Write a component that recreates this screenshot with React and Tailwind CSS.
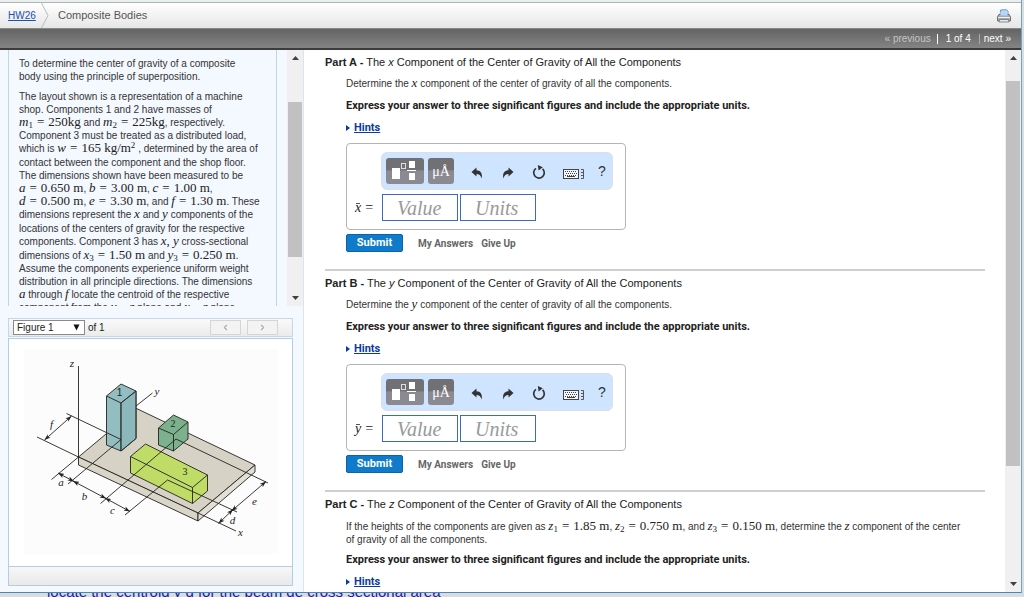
import { ChevronLeft, ChevronRight } from "lucide-react";

const serif = "font-['Liberation_Serif',serif]";

function M({ children }) {
  return <span className="font-['Liberation_Serif',serif] text-[13px] leading-[0] text-[#222]">{children}</span>;
}

function V({ children, sub }) {
  return (
    <>
      <i>{children}</i>
      {sub && <sub className="text-[9px] leading-[0]">{sub}</sub>}
    </>
  );
}

function Eq() {
  return <span className="px-1">=</span>;
}

function Triangle({ up }) {
  return (
    <svg className="h-1 w-[7px]" viewBox="0 0 7 4" aria-hidden="true">
      <path d={up ? "M0 4 L3.5 0 L7 4 Z" : "M0 0 L3.5 4 L7 0 Z"} fill="#404040" />
    </svg>
  );
}

function Scrollbar({ before, thumb, after, label }) {
  return (
    <div aria-label={label} className="flex w-4 shrink-0 flex-col items-center bg-[#f0f0f0] px-px">
      <div className="flex h-4 shrink-0 items-center">
        <Triangle up />
      </div>
      <div style={{ flexGrow: before }} />
      <div className="w-full bg-[#c1c1c1]" style={{ flexGrow: thumb }} />
      <div style={{ flexGrow: after }} />
      <div className="flex h-4 shrink-0 items-center">
        <Triangle />
      </div>
    </div>
  );
}

function Printer() {
  return (
    <svg className="h-[14px] w-[14px]" viewBox="0 0 14 14" aria-hidden="true">
      <path d="M3 7 L3.6 1 L9.5 0.7 L11 2.2 L11 7 Z" fill="#b9dcfa" stroke="#5f8fc4" strokeWidth="0.9" />
      <path d="M1.8 5.5 L12.2 5.5 L13.5 8 L13.5 12 L0.5 12 L0.5 8 Z" fill="#a9a9ae" stroke="#5b5b60" strokeWidth="0.8" />
      <path d="M3.4 3 H10.6 V6.5 H3.4 Z" fill="#b5d6f8" />
      <path d="M1 8.5 H13" stroke="#f2f2f2" strokeWidth="1" />
      <path d="M2.5 10.5 H11.5 L12 13 H2 Z" fill="#dfeaf6" stroke="#66666b" strokeWidth="0.7" />
    </svg>
  );
}

function Header() {
  return (
    <header className="shrink-0">
      <div className="h-[3px] border-b border-[#b0b6b6] bg-[#e9eeee]" />
      <div className="flex h-[25px] items-center bg-gradient-to-b from-white to-[#e6e6e6] pl-2 text-[11px] text-[#555]">
        <a href="#hw26" className="w-[27px] text-[10px] text-[#1c4fb0] underline">HW26</a>
        <svg className="ml-1.5 h-[25px] w-2 shrink-0" viewBox="0 0 8 25" aria-hidden="true">
          <path d="M0.5 0 L7 12.5 L0.5 25" fill="none" stroke="#bbb" />
        </svg>
        <span className="ml-[9px]">Composite Bodies</span>
        <button aria-label="Print" className="mr-2.5 ml-auto">
          <Printer />
        </button>
      </div>
      <nav className="flex h-[22px] items-center justify-end border-t border-b-2 border-t-[#888] border-b-[#3c3c3c] bg-gradient-to-b from-[#636463] to-[#848484] pr-2.5 text-[10px] text-white">
        <a href="#previous" className="text-[#c4c4c4]">« previous</a>
        <span className="ml-1.5 h-2.5 w-px bg-white" />
        <span className="mx-2">1 of 4</span>
        <span className="mr-1 h-2.5 w-px bg-[#aaa]" />
        <a href="#next">next »</a>
      </nav>
    </header>
  );
}

function Introduction() {
  return (
    <div className="flex min-h-0 flex-1 justify-between">
      <div className="w-[269px] overflow-hidden border-x border-[#bfd6e8] pl-2.5 text-[10px] leading-[13px] whitespace-nowrap text-[#333]">
        <p className="pt-[7px]">
          To determine the center of gravity of a composite
          <br />
          body using the principle of superposition.
        </p>
        <div className="pt-[7px]">
          <div className="h-[13px]">The layout shown is a representation of a machine</div>
          <div className="h-[13px]">shop. Components 1 and 2 have masses of</div>
          <div className="h-[13px]"><M><V sub="1">m</V><Eq />250kg</M> and <M><V sub="2">m</V><Eq />225kg</M>, respectively.</div>
          <div className="h-[13px]">Component 3 must be treated as a distributed load,</div>
          <div className="h-[14px]">which is <M><V>w</V><Eq />165 kg/m<sup className="text-[9px] leading-[0]">2</sup></M> , determined by the area of</div>
          <div className="h-[13px]">contact between the component and the shop floor.</div>
          <div className="h-[13px]">The dimensions shown have been measured to be</div>
          <div className="h-[13px]"><M><V>a</V><Eq />0.650 m</M>, <M><V>b</V><Eq />3.00 m</M>, <M><V>c</V><Eq />1.00 m</M>,</div>
          <div className="h-[13px]"><M><V>d</V><Eq />0.500 m</M>, <M><V>e</V><Eq />3.30 m</M>, and <M><V>f</V><Eq />1.30 m</M>. These</div>
          <div className="h-[14px]">dimensions represent the <M><V>x</V></M> and <M><V>y</V></M> components of the</div>
          <div className="h-[13px]">locations of the centers of gravity for the respective</div>
          <div className="h-[14px]">components. Component 3 has <M><V>x</V>, <V>y</V></M> cross-sectional</div>
          <div className="h-[13px]">dimensions of <M><V sub="3">x</V><Eq />1.50 m</M> and <M><V sub="3">y</V><Eq />0.250 m</M>.</div>
          <div className="h-[13px]">Assume the components experience uniform weight</div>
          <div className="h-[13px]">distribution in all principle directions. The dimensions</div>
          <div className="h-[13px]"><M><V>a</V></M> through <M><V>f</V></M> locate the centroid of the respective</div>
          <div className="h-[13px]">component from the <M><V>y</V> – <V>z</V></M> plane and <M><V>x</V> – <V>z</V></M> plane</div>
        </div>
      </div>
      <Scrollbar label="Introduction scroll" before={36} thumb={155} after={33} />
    </div>
  );
}

const ink = "#26221e";

function Diagram() {
  return (
    <svg className="h-[205px] w-[254px]" viewBox="24 349 254 205" role="img" aria-label="Machine shop layout">
      <defs>
        <marker id="tip" viewBox="0 0 8 6" refX="7.5" refY="3" markerWidth="7" markerHeight="5" markerUnits="userSpaceOnUse" orient="auto-start-reverse">
          <path d="M0 0.3 L7.5 3 L0 5.7 L2 3 Z" fill={ink} />
        </marker>
      </defs>
      <rect x="24" y="349" width="254" height="205" fill="#fcfcfc" />
      <g stroke={ink} strokeWidth="0.9" strokeLinejoin="round" fill="none">
        <path d="M78.5 457 L136.5 408.5 L255 465 L198 513 Z" fill="#d6d2c6" />
        <path d="M78.5 457 L198 513 V521 L78.5 465 Z" fill="#d9d5c9" />
        <path d="M198 513 L255 465 V472 L198 521 Z" fill="#e2dfd6" />
        <path d="M78.5 366 V457 M136 406 L152.5 393" />
        <path d="M106.5 396 L121 384 L136 391 V438.5 L121 451 L106.5 445 Z" fill="#92bdc1" />
        <path d="M106.5 396 L121 403 L136 391 M121 403 V451" />
        <path d="M121 403 L136 391 V438.5 L121 451 Z" fill="#86b1b6" fillOpacity="0.5" />
        <path d="M158.5 428 L173.5 415 L188 422 V439 L173.5 451 L158.5 445 Z" fill="#7cb18d" />
        <path d="M158.5 428 L173.5 434.5 L188 422 M173.5 434.5 V451" />
        <path d="M130.5 456.5 L145.5 444 L207.5 475 V491 L192.5 503.5 L130.5 473 Z" fill="#bfdc66" />
        <path d="M130.5 456.5 L192.5 487.5 L207.5 475 M192.5 487.5 V503.5" />
        <path d="M66.5 413.5 L121 439.5 L68 484" />
        <path d="M37 437 L78.5 457 L51.5 479.5 M198 513 L236 531" />
        <path d="M100.5 503.5 L176 439 L268 483" />
        <path d="M125 515 L167.5 480 L237 512" />
        <path d="M71.5 416 L44.5 440" markerStart="url(#tip)" markerEnd="url(#tip)" />
        <path d="M58 473 L74 481.5" markerStart="url(#tip)" markerEnd="url(#tip)" />
        <path d="M73 481 L106 498.5" markerStart="url(#tip)" markerEnd="url(#tip)" />
        <path d="M105 498 L130 511.5" markerStart="url(#tip)" markerEnd="url(#tip)" />
        <path d="M266 481.5 L231.5 511" markerStart="url(#tip)" markerEnd="url(#tip)" />
        <path d="M233 509.5 L218.5 523.5" markerStart="url(#tip)" markerEnd="url(#tip)" />
      </g>
      <g className={`${serif} text-[11px] italic`} fill={ink} textAnchor="middle">
        <text x="72" y="367">z</text>
        <text x="157" y="395">y</text>
        <text x="51.5" y="428">f</text>
        <text x="61" y="486">a</text>
        <text x="84.5" y="500">b</text>
        <text x="112.5" y="514">c</text>
        <text x="254.5" y="505">e</text>
        <text x="232.5" y="524">d</text>
        <text x="240.5" y="536">x</text>
      </g>
      <g className={`${serif} text-[10px]`} fill={ink} textAnchor="middle">
        <text x="119.5" y="396" className="font-['Liberation_Sans',sans-serif]">1</text>
        <text x="173" y="427">2</text>
        <text x="185" y="475">3</text>
      </g>
    </svg>
  );
}

function Figure() {
  return (
    <section className="mt-3 mr-2.5 mb-1.5 shrink-0">
      <div className="flex h-[19px] items-center border border-[#c4d8ea] bg-gradient-to-b from-[#fafafa] to-[#ebebeb] pr-3.5 pl-1 text-[10px] text-[#222]">
        <label className="flex h-[15px] w-[72px] items-center border border-[#8a8a8a] bg-white pr-1 pl-[3px]">
          <select aria-label="Figure" className="min-w-0 flex-1 appearance-none bg-transparent outline-none">
            <option>Figure 1</option>
          </select>
          <svg className="pointer-events-none h-[7px] w-[7px]" viewBox="0 0 7 7" aria-hidden="true">
            <path d="M0.5 0.5 H6.5 L3.5 6.5 Z" fill="#111" />
          </svg>
        </label>
        <span className="ml-[3px]">of 1</span>
        <button aria-label="Previous figure" className="mr-1.5 ml-auto flex h-[15px] w-[31px] items-center justify-center border border-[#d5d5d5] bg-[#f3f3f3] text-[#aaa]">
          <ChevronLeft size={9} strokeWidth={3} />
        </button>
        <button aria-label="Next figure" className="flex h-[15px] w-[31px] items-center justify-center border border-[#d5d5d5] bg-[#f3f3f3] text-[#aaa]">
          <ChevronRight size={9} strokeWidth={3} />
        </button>
      </div>
      <div className="mt-px border border-[#b5cde4] bg-white">
        <div className="pt-2.5 pb-3 pl-[15px]">
          <Diagram />
        </div>
        <div className="h-[19px] border-t border-[#b5cde4] bg-gradient-to-b from-[#f7f7f7] to-[#e9e9e9]" />
      </div>
    </section>
  );
}

function TemplateButton() {
  return (
    <button aria-label="Templates" className="h-[26px] w-[38px] rounded-[3px] bg-gradient-to-b from-[#717175] from-45% to-[#8b8a92] to-50%">
      <svg className="h-[26px] w-[38px]" viewBox="0 0 38 26" aria-hidden="true">
        <g fill="#fff">
          <rect x="6" y="10" width="8" height="11" />
          <rect x="23" y="3" width="6" height="7" />
          <rect x="21" y="12" width="9" height="1" />
          <rect x="23" y="15" width="6" height="7" />
        </g>
        <rect x="15.5" y="5.5" width="4" height="5" fill="none" stroke="#ddd" />
      </svg>
    </button>
  );
}

function Undo() {
  return (
    <svg className="h-3 w-3" viewBox="0 0 12 12" aria-hidden="true">
      <path d="M0.5 5 L5.5 0.5 V3.3 C9.5 3.4 11.8 6.5 10.6 11.6 C9.8 8.2 8 6.9 5.5 6.9 V9.5 Z" fill="#333" />
    </svg>
  );
}

function Redo() {
  return (
    <svg className="h-3 w-3" viewBox="0 0 12 12" aria-hidden="true">
      <path d="M11.5 5 L6.5 0.5 V3.3 C2.5 3.4 0.2 6.5 1.4 11.6 C2.2 8.2 4 6.9 6.5 6.9 V9.5 Z" fill="#333" />
    </svg>
  );
}

function Reset() {
  return (
    <svg className="h-[15px] w-[14px]" viewBox="0 0 14 15" aria-hidden="true">
      <path d="M4 3.4 A5.3 5.3 0 1 0 10.6 3.9" fill="none" stroke="#333" strokeWidth="1.7" />
      <path d="M5.8 0 L10.8 2.2 L6.6 5.6 Z" fill="#333" />
    </svg>
  );
}

function Keyboard() {
  return (
    <svg className="h-[10px] w-[21px]" viewBox="0 0 21 10" aria-hidden="true">
      <rect x="0.5" y="0.5" width="15" height="9" fill="#f2f6fa" stroke="#444" />
      <path d="M2 2.5 H14 M3 4.5 H14" stroke="#444" strokeDasharray="1 1" />
      <path d="M2 6.5 H14" stroke="#444" strokeDasharray="1 1" />
      <path d="M4 7.5 H12" stroke="#444" />
      <path d="M18 0.5 H20.5 V9.5 H18 M18 3.5 H20 M18 6.5 H20" fill="none" stroke="#555" />
    </svg>
  );
}

function AnswerForm({ symbol, part }) {
  const field =
    "h-[27px] w-[76px] border border-[#3a69c8] bg-white pl-[14px] font-['Liberation_Serif',serif] text-[20px] italic text-[#333] placeholder:text-[#999] outline-none";
  return (
    <form className="mt-[7px]" onSubmit={(e) => e.preventDefault()}>
      <div className="h-[87px] w-[280px] rounded-[4px] border border-[#b5b5b5] pt-2 pl-2">
        <div className="ml-[26px] flex h-[38px] w-[232px] items-center rounded-md border border-[#dcdfe3] bg-[#cfe5ff] pl-1 text-[#333]">
          <TemplateButton />
          <button aria-label="Symbols" className={`ml-1 h-[26px] w-[26px] rounded-[3px] bg-gradient-to-b from-[#717175] from-45% to-[#8b8a92] to-50% ${serif} text-[14px] text-white`}>
            μÅ
          </button>
          <div className="flex items-center pt-[3px]">
            <button aria-label="Undo" className="ml-[17px]"><Undo /></button>
            <button aria-label="Redo" className="ml-[19px]"><Redo /></button>
            <button aria-label="Reset" className="ml-[18px]"><Reset /></button>
            <button aria-label="Keyboard shortcuts" className="mt-0.5 ml-[17px]"><Keyboard /></button>
          </div>
          <button aria-label="Help" className="ml-3.5 text-[14px]">?</button>
        </div>
        <div className="mt-1 flex items-center gap-0.5">
          <span className={`flex w-[25px] items-center gap-1 ${serif} text-[14px] text-[#222]`}>
            <i className="flex flex-col items-center leading-[8px]">
              <span className="h-px w-1 bg-[#555]" />
              <span>{symbol}</span>
            </i>
            <span>=</span>
          </span>
          <input aria-label={`${part} value`} placeholder="Value" className={field} />
          <input aria-label={`${part} units`} placeholder="Units" className={field} />
        </div>
      </div>
      <div className="mt-1 flex h-[18px] items-center font-[Roboto,Arial,sans-serif] text-[10px] font-bold text-[#666]">
        <button type="submit" className="h-[18px] w-[57px] rounded-[2px] border border-[#0b63ad] bg-[#107acb] text-[11px] text-white">
          Submit
        </button>
        <a href="#answers" className="ml-[15px]">My Answers</a>
        <a href="#giveup" className="ml-2">Give Up</a>
      </div>
    </form>
  );
}

function Part({ letter, axis, children }) {
  return (
    <section className="pt-1 text-[10px] text-[#333]">
      <h2 className="text-[11px] leading-[16px] text-[#222]">
        <b>Part {letter} -</b> The <i>{axis}</i> Component of the Center of Gravity of All the Components
      </h2>
      <div className="pl-[21px]">{children}</div>
    </section>
  );
}

function Instructions() {
  return (
    <div className="font-[Roboto,Arial,sans-serif] text-[11px] leading-[16px] font-bold">
      <p className="mt-1.5 text-[#222]">
        Express your answer to three significant figures and include the appropriate units.
      </p>
      <a href="#hints" className="mt-1.5 flex items-center text-[#0b3aa0]">
        <svg className="mr-1 h-1.5 w-1" viewBox="0 0 4 6" aria-hidden="true">
          <path d="M0 0 L4 3 L0 6 Z" fill="#0b3aa0" />
        </svg>
        <span className="underline">Hints</span>
      </a>
    </div>
  );
}

function Divider() {
  return <hr className="mt-[17px] border-t-2 border-[#cfcfcf]" />;
}

export default function App() {
  return (
    <div className="flex h-screen flex-col overflow-hidden bg-[#dcdcdc] font-['Liberation_Sans',Arial,sans-serif]">
      <div className="mr-0.5 flex min-h-0 flex-1 flex-col border-r border-b border-r-[#6aa5cc] border-b-[#3f8ac2] bg-white">
        <Header />
        <div className="flex min-h-0 flex-1">
          <aside className="flex w-[304px] shrink-0 flex-col border-r border-[#d8e6f2] bg-[#f4f8ff] pl-2">
            <Introduction />
            <Figure />
          </aside>
          <main className="min-w-0 flex-1 overflow-hidden pr-5 pl-[21px]">
            <Part letter="A" axis="x">
              <p className="mt-1.5 leading-[16px]">
                Determine the <M><i>x</i></M> component of the center of gravity of all the components.
              </p>
              <Instructions />
              <AnswerForm symbol="x" part="Part A" />
            </Part>
            <Divider />
            <Part letter="B" axis="y">
              <p className="mt-1.5 leading-[16px]">
                Determine the <M><i>y</i></M> component of the center of gravity of all the components.
              </p>
              <Instructions />
              <AnswerForm symbol="y" part="Part B" />
            </Part>
            <Divider />
            <Part letter="C" axis="z">
              <p className="mt-2 pr-4 leading-[13px]">
                If the heights of the components are given as <M><V sub="1">z</V><Eq />1.85 m</M>, <M><V sub="2">z</V><Eq />0.750 m</M>, and{" "}
                <M><V sub="3">z</V><Eq />0.150 m</M>, determine the <M><i>z</i></M> component of the center of gravity of all the components.
              </p>
              <Instructions />
            </Part>
          </main>
          <Scrollbar label="Page scroll" before={15} thumb={384} after={110} />
        </div>
      </div>
      <div className="flex h-1 shrink-0 items-end overflow-hidden pl-[47px] text-[15px] leading-[10px] whitespace-nowrap text-[#2a1a9a]">
        <p>locate the centroid y d for the beam de cross sectional area</p>
      </div>
    </div>
  );
}
